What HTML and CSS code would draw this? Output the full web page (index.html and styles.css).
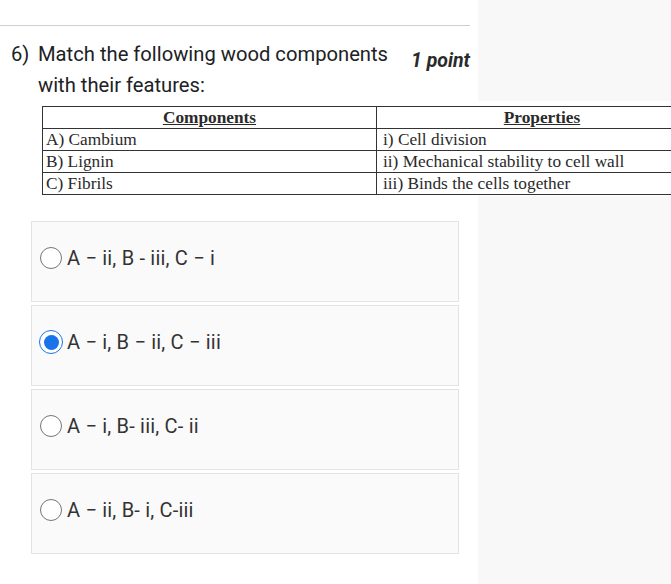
FILE: index.html
```html
<!DOCTYPE html>
<html lang="en">
<head>
<meta charset="utf-8">
<title>Question 6</title>
<link rel="stylesheet" href="styles.css">
</head>
<body>
<div class="main">
  <div class="sep"></div>
  <div class="question">
    <div class="qtext">
      <span class="num">6)</span>
      <span class="body">Match the following wood components with their features:</span>
    </div>
    <div class="points">1 point</div>
  </div>
  <div class="tablewrap">
    <table class="match">
      <thead>
        <tr><th class="c1">Components</th><th class="c2">Properties</th></tr>
      </thead>
      <tbody>
        <tr><td>A) Cambium</td><td class="r">i) Cell division</td></tr>
        <tr><td>B) Lignin</td><td class="r">ii) Mechanical stability to cell wall</td></tr>
        <tr><td>C) Fibrils</td><td class="r">iii) Binds the cells together</td></tr>
      </tbody>
    </table>
  </div>
  <div class="options">
    <label class="option"><span class="radio"></span><span class="otext">A − ii, B - iii, C − i</span></label>
    <label class="option"><span class="radio checked"></span><span class="otext">A − i, B − ii, C − iii</span></label>
    <label class="option"><span class="radio"></span><span class="otext">A − i, B- iii, C- ii</span></label>
    <label class="option"><span class="radio"></span><span class="otext">A − ii, B- i, C-iii</span></label>
  </div>
</div>
</body>
</html>
```
FILE: styles.css
```css
html, body {
  margin: 0;
  padding: 0;
}
body {
  background: #f8f8f8;
  width: 671px;
  height: 584px;
  overflow: hidden;
  font-family: Roboto, "Liberation Sans", sans-serif;
}
.main {
  width: 478px;
  min-height: 584px;
  background: #ffffff;
  padding-top: 25px;
  box-sizing: border-box;
}
.sep {
  width: 470px;
  height: 1px;
  background: #cfcfcf;
}
.question {
  display: flex;
  width: 470px;
  margin-top: 13px;
}
.qtext {
  display: flex;
  flex: 1;
  font-size: 20.2px;
  line-height: 31px;
  color: #202124;
}
.num {
  width: 27px;
  padding-left: 11px;
  flex: none;
}
.body {
  flex: 1;
}
.points {
  font-size: 19.5px;
  font-weight: 700;
  font-style: italic;
  color: #2a2a2a;
  padding-top: 9px;
  line-height: 26px;
  white-space: nowrap;
}
.tablewrap {
  background: #ffffff;
  width: 671px;
  padding: 5px 0 1px 42px;
  box-sizing: border-box;
  overflow: hidden;
}
.match {
  border-collapse: collapse;
  width: 666px;
  font-family: "Liberation Serif", "Times New Roman", serif;
  font-size: 17.3px;
  color: #2a2a2a;
}
.match th, .match td {
  border: 1px solid #333;
  padding: 0 3px;
  height: 21px;
  line-height: 20px;
  text-align: left;
  font-weight: 400;
}
.match td.r {
  padding-left: 6px;
}
.match th {
  text-align: center;
  font-weight: 700;
  text-decoration: underline;
}
.match .c1 { width: 327px; }
.options {
  margin-top: 25px;
  margin-left: 31px;
  width: 428px;
  display: flex;
  flex-direction: column;
  gap: 3px;
}
.option {
  height: 81px;
  box-sizing: border-box;
  border: 1px solid #e3e3e3;
  background: #fafafa;
  display: flex;
  align-items: flex-start;
  padding: 25px 0 0 8px;
}
.radio {
  width: 22px;
  height: 22px;
  box-sizing: border-box;
  border: 1.5px solid #767676;
  border-radius: 50%;
  background: #fff;
  flex: none;
  display: flex;
  align-items: center;
  justify-content: center;
}
.radio.checked {
  width: 24px;
  height: 24px;
  margin: -1px;
  border: 1.5px solid #1a73e8;
}
.radio.checked::after {
  content: "";
  width: 15px;
  height: 15px;
  border-radius: 50%;
  background: #1a73e8;
}
.otext {
  margin-left: 5px;
  font-size: 20px;
  letter-spacing: 0.2px;
  line-height: 22px;
  color: #333;
}
```
